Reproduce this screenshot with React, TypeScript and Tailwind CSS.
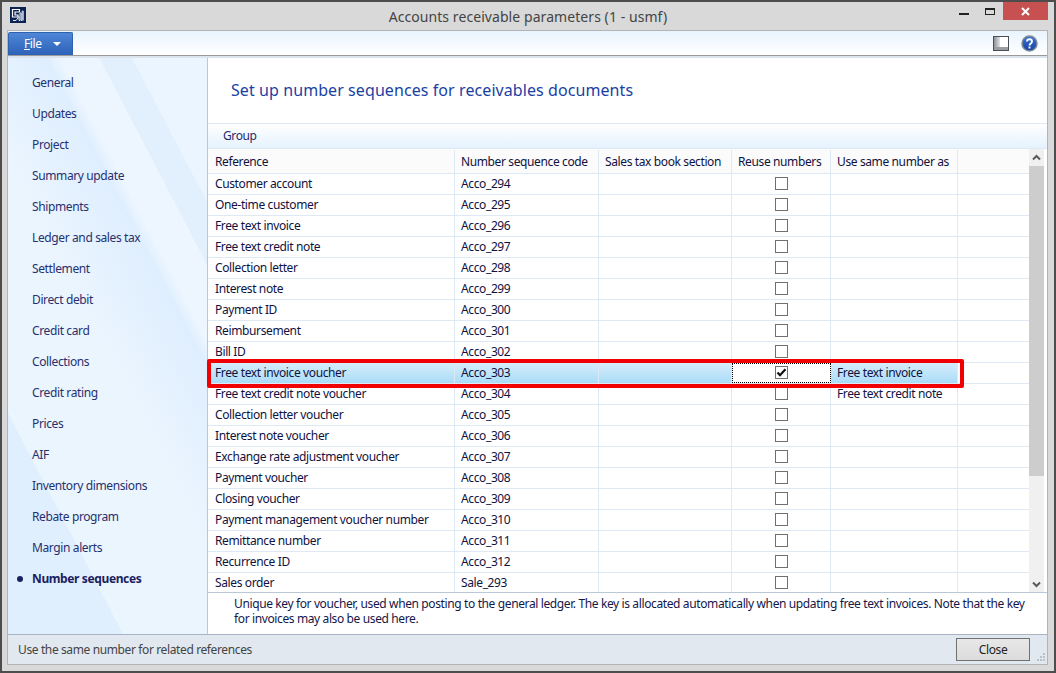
import React from "react"

const navItems = [
  "General", "Updates", "Project", "Summary update", "Shipments", "Ledger and sales tax",
  "Settlement", "Direct debit", "Credit card", "Collections", "Credit rating", "Prices",
  "AIF", "Inventory dimensions", "Rebate program", "Margin alerts",
]

const rows: { name: string; code: string; same?: string; checked?: boolean; active?: boolean }[] = [
  { name: "Customer account", code: "Acco_294" },
  { name: "One-time customer", code: "Acco_295" },
  { name: "Free text invoice", code: "Acco_296" },
  { name: "Free text credit note", code: "Acco_297" },
  { name: "Collection letter", code: "Acco_298" },
  { name: "Interest note", code: "Acco_299" },
  { name: "Payment ID", code: "Acco_300" },
  { name: "Reimbursement", code: "Acco_301" },
  { name: "Bill ID", code: "Acco_302" },
  { name: "Free text invoice voucher", code: "Acco_303", same: "Free text invoice", checked: true, active: true },
  { name: "Free text credit note voucher", code: "Acco_304", same: "Free text credit note" },
  { name: "Collection letter voucher", code: "Acco_305" },
  { name: "Interest note voucher", code: "Acco_306" },
  { name: "Exchange rate adjustment voucher", code: "Acco_307" },
  { name: "Payment voucher", code: "Acco_308" },
  { name: "Closing voucher", code: "Acco_309" },
  { name: "Payment management voucher number", code: "Acco_310" },
  { name: "Remittance number", code: "Acco_311" },
  { name: "Recurrence ID", code: "Acco_312" },
  { name: "Sales order", code: "Sale_293" },
]

const cell = "h-full shrink-0 border-r border-[#dde9f5] flex items-center truncate"

function AppIcon() {
  return (
    <svg width="16" height="16" viewBox="0 0 16 16" className="block">
      <rect width="16" height="16" fill="#0b2350" />
      <path d="M2.500 2.500h7v2.500H5v3h3v2H2.500z" fill="none" stroke="#fff" strokeWidth="1.200" />
      <path d="M3 13.500h3l3-4v4h1V6h1.200v7.500h1V4h1v9.500" fill="none" stroke="#dfe6f2" strokeWidth="1" />
    </svg>
  )
}

function HelpIcon() {
  return (
    <svg width="17" height="17" viewBox="0 0 17 17" className="block">
      <defs>
        <linearGradient id="helpFill" x1="0" y1="0" x2="0" y2="1">
          <stop offset="0" stopColor="#3f77d6" />
          <stop offset="1" stopColor="#123f9f" />
        </linearGradient>
      </defs>
      <circle cx="8.500" cy="8.500" r="7.500" fill="url(#helpFill)" stroke="#7f8a99" strokeWidth="1.500" />
      <path d="M6 6.500c0-3 5-3 5 0 0 2-2.500 2-2.500 4" fill="none" stroke="#fff" strokeWidth="1.800" />
      <rect x="7.500" y="11.500" width="2" height="2" fill="#fff" />
    </svg>
  )
}

function PanelIcon() {
  return (
    <svg width="16" height="15" viewBox="0 0 16 15" className="block">
      <defs>
        <linearGradient id="panelFill" x1="0" y1="0" x2="1" y2="0">
          <stop offset="0" stopColor="#8d9196" />
          <stop offset="1" stopColor="#e2e4e6" />
        </linearGradient>
      </defs>
      <rect x="0.500" y="0.500" width="15" height="14" fill="#fff" stroke="#4a4f55" />
      <rect x="1" y="1" width="6" height="13" fill="url(#panelFill)" />
      <rect x="1" y="11" width="14" height="3" fill="#9a9ea3" />
    </svg>
  )
}

function Chevron({ up }: { up?: boolean }) {
  return (
    <svg width="9" height="7" viewBox="0 0 9 7" className="block">
      <path d={up ? "M1 5.500 4.500 2 8 5.500" : "M1 1.500 4.500 5 8 1.500"} fill="none" stroke="#5a5a5a" strokeWidth="2" />
    </svg>
  )
}

function CheckBox({ checked }: { checked?: boolean }) {
  return (
    <span className="w-[13px] h-[13px] mb-[1px] border border-[#707070] bg-white flex items-center justify-center">
      {checked && (
        <svg width="11" height="9" viewBox="0 0 11 9" className="block">
          <path d="M1.500 4.500 4 7.200 9.500 1.200" fill="none" stroke="#111" strokeWidth="2.200" />
        </svg>
      )}
    </span>
  )
}

export default function App() {
  return (
    <div className="relative w-[1056px] h-[673px] overflow-hidden bg-[#d9d9d9] border-2 border-[#4d4d4d] font-['Noto_Sans',sans-serif] text-[12px] tracking-[-0.38px] text-[#10123f]">
      {/* Title bar */}
      <div className="h-[28px] grid grid-cols-[1fr_auto_1fr] items-center">
        <div className="pl-[8px] mb-[2px]">
          <AppIcon />
        </div>
        <div className="text-[14px] tracking-[0.07px] text-[#444]">Accounts receivable parameters (1 - usmf)</div>
        <div className="flex justify-end items-start h-full pr-[6px]">
          <div className="w-[10px] h-[2px] bg-[#222] mt-[11px] mr-[16px]" />
          <div className="w-[10px] h-[7px] border border-t-2 border-[#222] mt-[6px] mr-[8px]" />
          <div className="w-[45px] h-[18px] bg-[#c75050] flex items-center justify-center">
            <svg width="9" height="9" viewBox="0 0 9 9" className="block">
              <path d="M1 1 8 8M8 1 1 8" stroke="#fff" strokeWidth="2" />
            </svg>
          </div>
        </div>
      </div>

      {/* Inner panel */}
      <div className="ml-[5px] mr-[6px] border border-[#b4b4b4] flex flex-col h-[635px]">
        {/* File bar */}
        <div className="h-[25px] shrink-0 border-b border-[#9a9a9a] bg-gradient-to-b from-[#e9f4fe] to-white flex items-end justify-between">
          <div className="w-[65px] h-[23px] rounded-t-[2px] border border-[#2f62ad] border-b-0 bg-gradient-to-b from-[#4f86d6] to-[#2c62b8] text-white flex items-center gap-[11px] pl-[15px]">
            <span><span className="underline">F</span>ile</span>
            <span className="w-0 h-0 border-l-[4px] border-r-[4px] border-t-[4px] border-l-transparent border-r-transparent border-t-white" />
          </div>
          <div className="flex items-center gap-[12px] pr-[9px] h-full">
            <PanelIcon />
            <HelpIcon />
          </div>
        </div>
        <div className="h-[2px] shrink-0 bg-[#dbe3ec]" />

        {/* Main */}
        <div className="h-[576px] shrink-0 flex">
          {/* Sidebar */}
          <div className="w-[200px] shrink-0 border-r border-[#b9c7d6] pt-[9px] bg-[linear-gradient(62.5deg,#e0effe_0px,#e0effe_102px,#ebf5fe_102px,#ebf5fe_215px,#dfeefe_300px,#edf6ff_312px,#edf6ff_347px,#e2f0fe_347px,#e2f0fe_376px,#ebf5ff_376px)]">
            {navItems.map((item) => (
              <div key={item} className="h-[31px] pl-[24px] flex items-center text-[#27306f]">
                {item}
              </div>
            ))}
            <div className="h-[31px] pl-[24px] flex items-center font-bold text-[#1b2160] relative">
              <span className="absolute left-[9px] top-[13px] w-[6px] h-[6px] rounded-full bg-[#1b2160]" />
              Number sequences
            </div>
          </div>

          {/* Right side */}
          <div className="flex-1 min-w-0 flex flex-col bg-white">
            <div className="h-[65px] shrink-0 pl-[23px] pt-[20px] text-[16px] tracking-[0.08px] text-[#1a3fa3]">
              Set up number sequences for receivables documents
            </div>
            <div className="h-[26px] shrink-0 border-y border-[#dfe9f3] bg-gradient-to-b from-white to-[#e5f2fe] pl-[15px] flex items-center text-[#1f2a6a]">
              Group
            </div>

            <div className="h-[443px] shrink-0 flex overflow-hidden">
              {/* Grid */}
              <div className="w-[821px] shrink-0">
                <div className="h-[25px] pt-[1px] flex items-center border-b border-[#dde9f5] bg-[#fbfbfb]">
                  <div className={`${cell} w-[247px] pl-[7px]`}>Reference</div>
                  <div className={`${cell} w-[144px] pl-[6px]`}>Number sequence code</div>
                  <div className={`${cell} w-[133px] pl-[6px]`}>Sales tax book section</div>
                  <div className={`${cell} w-[99px] pl-[6px]`}>Reuse numbers</div>
                  <div className={`${cell} w-[127px] pl-[6px]`}>Use same number as</div>
                </div>
                {rows.map((row) => (
                  <div key={row.code} className="h-[21px] border-b border-[#dde9f5]">
                    <div
                      className={`h-full w-[750px] flex items-center ${
                        row.active ? "bg-gradient-to-b from-[#d6edfb] to-[#a9dcf8]" : ""
                      }`}
                    >
                      <div className={`${cell} w-[247px] pl-[7px]`}>{row.name}</div>
                      <div className={`${cell} w-[144px] pl-[6px]`}>{row.code}</div>
                      <div className={`${cell} w-[133px] pl-[6px]`} />
                      <div
                        className={`${cell} w-[99px] justify-center ${
                          row.active ? "bg-white border border-dotted border-black" : ""
                        }`}
                      >
                        <CheckBox checked={row.checked} />
                      </div>
                      <div className={`${cell} w-[127px] pl-[6px] ${row.active ? "border-[#8ed0f4]" : ""}`}>{row.same}</div>
                    </div>
                  </div>
                ))}
              </div>

              {/* Scrollbar */}
              <div className="w-[15px] shrink-0 h-[443px] bg-[#f0f0f0] flex flex-col">
                <div className="h-[17px] shrink-0 flex items-center justify-center">
                  <Chevron up />
                </div>
                <div className="h-[310px] shrink-0 bg-[#cdcdcd]" />
                <div className="flex-1" />
                <div className="h-[16px] shrink-0 flex items-center justify-center">
                  <Chevron />
                </div>
              </div>
            </div>

            {/* Description */}
            <div className="flex-1 border-t border-[#b9c7d6] bg-white pl-[26px] pt-[3px] leading-[15px] text-[#14174a]">
              Unique key for voucher, used when posting to the general ledger. The key is allocated automatically when updating free text invoices. Note that the key
              <br />
              for invoices may also be used here.
            </div>
          </div>
        </div>

        {/* Status bar */}
        <div className="flex-1 border-t border-[#a9b5c4] bg-[#e1e8f0] flex items-center justify-between pl-[10px] text-[#444]">
          <span className="pt-[1px]">Use the same number for related references</span>
          <div className="flex items-end h-full">
            <button className="w-[74px] h-[23px] mb-[3px] border border-[#707070] bg-gradient-to-b from-[#e8e8e8] to-[#dcdcdc] text-[#222]">
              Close
            </button>
            <svg width="17" height="12" viewBox="0 0 17 12" className="block mb-[1px]">
              <path d="M13 2h2v2h-2zM10 5h2v2h-2zM13 5h2v2h-2zM7 8h2v2H7zM10 8h2v2h-2zM13 8h2v2h-2z" fill="#b9c0c8" />
            </svg>
          </div>
        </div>
      </div>

      {/* Red highlight annotation */}
      <div className="absolute left-[205px] top-[357px] w-[757px] h-[29px] border-4 border-[#f00000] rounded-[2px] pointer-events-none" />
    </div>
  )
}
